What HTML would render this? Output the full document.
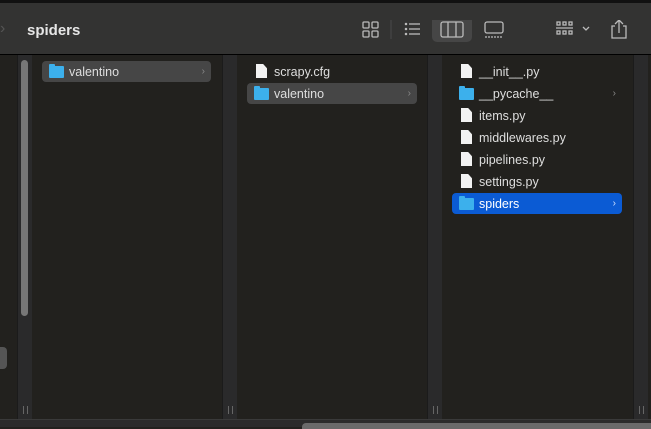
<!DOCTYPE html>
<html><head><meta charset="utf-8"><style>
*{margin:0;padding:0;box-sizing:border-box}
body{width:651px;height:427px;overflow:hidden;background:#22211e;font-family:"Liberation Sans",sans-serif;position:relative;color:#dcdcdc}
.tb{position:absolute;left:0;top:0;width:651px;height:55px;background:#333332;border-top:3px solid #111;border-bottom:1px solid #000}
.title{position:absolute;left:27px;top:19px;font-size:15px;font-weight:bold;color:#e6e6e6}
.strip{position:absolute;top:55px;width:15px;height:364px;background:#2a2a2b;border-left:1px solid #1b1b1b}
.grip{position:absolute;bottom:5px;left:5px;width:5px;height:8px;border-left:1px solid #666;border-right:1px solid #666}
.bot{position:absolute;left:0;top:419px;width:651px;height:8px;background:#2b2b2b;border-top:1px solid #3a3a3a}
.row{position:absolute;height:21px;font-size:12.5px;line-height:22px;padding-left:27px;color:#dedede}
.sel{background:#464646;border-radius:4px}
.blue{background:#0b5bd4;border-radius:4px;color:#fff}
.chev{position:absolute;right:6px;top:0;font-size:10px;color:#888}
.fold{position:absolute;left:7px;top:5px;width:15px;height:12px;background:#3cb0ec;border-radius:1px}
.fold:before{content:"";position:absolute;left:0;top:-2px;width:6px;height:3px;background:#3cb0ec;border-radius:1px 1px 0 0}
.file{position:absolute;left:9px;top:3px;width:11px;height:14px;background:#f2f2f2;clip-path:polygon(0 0,65% 0,100% 30%,100% 100%,0 100%)}
</style></head><body>
<div class="tb">
<div style="position:absolute;left:0;top:17px;color:#555;font-size:16px">›</div>
<div class="title">spiders</div>
<svg style="position:absolute;left:360px;top:17px" width="290" height="30" fill="none" stroke="#bbb" stroke-width="1.3">
<rect x="3" y="2" width="6" height="6" rx="1"/><rect x="12" y="2" width="6" height="6" rx="1"/><rect x="3" y="11" width="6" height="6" rx="1"/><rect x="12" y="11" width="6" height="6" rx="1"/>
<line x1="31" y1="0" x2="31" y2="19" stroke="#444"/>
<circle cx="46" cy="4" r=".6"/><circle cx="46" cy="9" r=".6"/><circle cx="46" cy="14" r=".6"/>
<line x1="49" y1="4" x2="60" y2="4"/><line x1="49" y1="9" x2="60" y2="9"/><line x1="49" y1="14" x2="60" y2="14"/>
<rect x="72" y="-1" width="40" height="27" rx="5" fill="#464646" stroke="none" transform="translate(0,-4)"/>
<rect x="81" y="2" width="22" height="15" rx="2"/><line x1="88" y1="2" x2="88" y2="17"/><line x1="96" y1="2" x2="96" y2="17"/>
<rect x="125" y="2" width="18" height="11" rx="2"/><line x1="125" y1="17" x2="143" y2="17" stroke-dasharray="2 1"/>
<line x1="196" y1="-1" x2="213" y2="-1"/><rect x="197" y="2" width="3" height="3"/><rect x="203" y="2" width="3" height="3"/><rect x="209" y="2" width="3" height="3"/>
<line x1="196" y1="8" x2="213" y2="8"/><rect x="197" y="11" width="3" height="3"/><rect x="203" y="11" width="3" height="3"/><rect x="209" y="11" width="3" height="3"/>
<path d="M223 7l3 3 3-3"/>
<path d="M255 6h-3v12h14V6h-3M259 13V0M255 4l4-4 4 4"/>
</svg>
</div>
<div class="strip" style="left:17px"><div style="position:absolute;left:3px;top:5px;width:7px;height:256px;background:#777;border-radius:4px"></div><div class="grip"></div></div>
<div style="position:absolute;left:0;top:347px;width:7px;height:22px;background:#555;border-radius:0 4px 4px 0"></div>
<div class="strip" style="left:222px"><div class="grip"></div></div>
<div class="strip" style="left:427px"><div class="grip"></div></div>
<div class="strip" style="left:633px"><div class="grip"></div></div>
<div class="bot"><div style="position:absolute;left:302px;top:3px;width:349px;height:6px;background:#6a6a6a;border-radius:4px 0 0 0"></div></div>

<div class="row sel" style="left:42px;top:61px;width:169px"><span class="fold"></span>valentino<span class="chev">›</span></div>

<div class="row" style="left:247px;top:61px;width:170px"><span class="file"></span>scrapy.cfg</div>
<div class="row sel" style="left:247px;top:83px;width:170px"><span class="fold"></span>valentino<span class="chev">›</span></div>

<div class="row" style="left:452px;top:61px;width:170px"><span class="file"></span>__init__.py</div>
<div class="row" style="left:452px;top:83px;width:170px"><span class="fold"></span>__pycache__<span class="chev">›</span></div>
<div class="row" style="left:452px;top:105px;width:170px"><span class="file"></span>items.py</div>
<div class="row" style="left:452px;top:127px;width:170px"><span class="file"></span>middlewares.py</div>
<div class="row" style="left:452px;top:149px;width:170px"><span class="file"></span>pipelines.py</div>
<div class="row" style="left:452px;top:171px;width:170px"><span class="file"></span>settings.py</div>
<div class="row blue" style="left:452px;top:193px;width:170px"><span class="fold"></span>spiders<span class="chev" style="color:#cfe0ff">›</span></div>
</body></html>
